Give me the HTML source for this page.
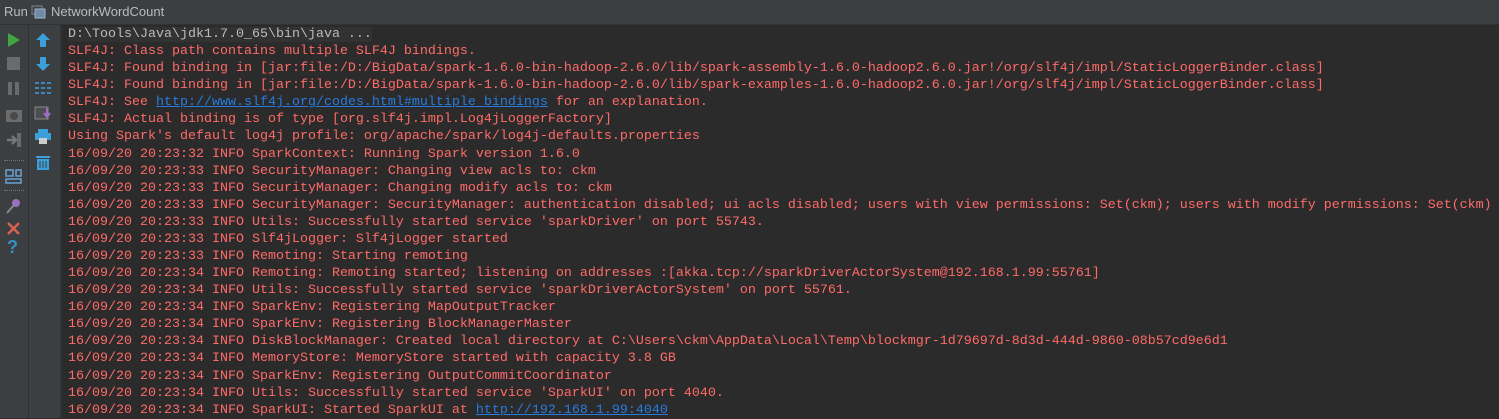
<!DOCTYPE html>
<html><head><style>
body{margin:0;width:1499px;height:418px;background:#2b2b2b;overflow:hidden;position:relative;font-family:"Liberation Sans",sans-serif}
#hdr{position:absolute;left:0;top:0;width:1499px;height:24px;background:#3c3f41;border-bottom:1px solid #323232;color:#bbb;font-size:13px;line-height:24px}
#tb1{position:absolute;left:0;top:25px;width:28px;height:393px;background:#3c3f41;border-right:1px solid #2f3133}
#tb2{position:absolute;left:29px;top:25px;width:31px;height:393px;background:#3c3f41;border-right:1px solid #323232}
#con{position:absolute;left:61px;top:25px;right:0;bottom:0;background:#2b2b2b;border-left:1px solid #313335}
pre{margin:0;position:absolute;left:68px;top:26px;font-family:"Liberation Mono",monospace;font-size:13.33px;line-height:17.08px;color:#ff6b68}
.g{color:#bbb;background:#323232}
a{color:#287bde;text-decoration:underline}
.ic{position:absolute}
</style></head><body>
<div id="hdr"><span style="position:absolute;left:4px">Run</span>
<svg class="ic" style="left:31px;top:5px" width="15" height="14"><rect x="1" y="1" width="10" height="8" fill="none" stroke="#7a8a99"/><rect x="4" y="4" width="10" height="9" fill="#6e8aa6" stroke="#9fb3c8"/></svg>
<span style="position:absolute;left:51px">NetworkWordCount</span></div>
<div id="tb1">
<svg class="ic" style="left:6px;top:7px" width="16" height="16"><path d="M2 1L14 8L2 15Z" fill="#3fa640"/></svg>
<svg class="ic" style="left:7px;top:32px" width="14" height="14"><rect width="13" height="13" fill="#6b6b6b"/></svg>
<svg class="ic" style="left:7px;top:57px" width="14" height="14"><rect x="1" width="4" height="13" fill="#6b6b6b"/><rect x="8" width="4" height="13" fill="#6b6b6b"/></svg>
<svg class="ic" style="left:5px;top:82px" width="18" height="16"><rect x="1" y="3" width="16" height="12" fill="#6b6b6b"/><circle cx="9" cy="9" r="4" fill="#4a4a4a"/></svg>
<svg class="ic" style="left:5px;top:107px" width="18" height="16"><path d="M2 8h8M7 4l4 4-4 4" stroke="#777" stroke-width="2.5" fill="none"/><rect x="12" y="1" width="4" height="14" fill="#6b6b6b"/></svg>
<div class="ic" style="left:4px;top:135px;width:20px;border-top:1px dotted #777"></div>
<svg class="ic" style="left:5px;top:143px" width="18" height="18"><rect x="1" y="2" width="7" height="6" fill="none" stroke="#6ba2d0" stroke-width="1.5"/><rect x="11" y="2" width="5" height="6" fill="none" stroke="#6ba2d0" stroke-width="1.5"/><rect x="1" y="11" width="15" height="4" fill="none" stroke="#6ba2d0" stroke-width="1.5"/></svg>
<div class="ic" style="left:4px;top:165px;width:20px;border-top:1px dotted #777"></div>
<svg class="ic" style="left:5px;top:172px" width="18" height="18"><circle cx="11" cy="6" r="4" fill="#9d6fc0"/><path d="M9 8L2 16" stroke="#888" stroke-width="2"/></svg>
<svg class="ic" style="left:6px;top:196px" width="16" height="16"><path d="M2 2L13 13M13 2L2 13" stroke="#d9604e" stroke-width="2.5"/></svg>
<div class="ic" style="left:7px;top:212px;color:#3592c4;font-weight:bold;font-size:18px">?</div>
</div>
<div id="tb2">
<svg class="ic" style="left:6px;top:7px" width="16" height="16"><path d="M8 1L15 8H11V15H5V8H1Z" fill="#3d9fd9"/></svg>
<svg class="ic" style="left:6px;top:31px" width="16" height="16"><path d="M8 15L15 8H11V1H5V8H1Z" fill="#3d9fd9"/></svg>
<svg class="ic" style="left:5px;top:55px" width="18" height="16"><path d="M1 3h16M1 8h16M1 13h16" stroke="#3d9fd9" stroke-width="1.5" stroke-dasharray="4 2"/></svg>
<svg class="ic" style="left:5px;top:80px" width="18" height="16"><rect x="1" y="2" width="13" height="12" fill="#4b4f52" stroke="#888"/><path d="M13 3v8M10 8l3 4 3-4" stroke="#9d6fc0" stroke-width="2" fill="none"/></svg>
<svg class="ic" style="left:6px;top:104px" width="16" height="16"><rect x="3" y="0" width="10" height="4" fill="#3d9fd9"/><rect x="0" y="4" width="16" height="7" fill="#3d9fd9"/><rect x="4" y="9" width="8" height="6" fill="#ccc"/></svg>
<svg class="ic" style="left:6px;top:129px" width="16" height="17"><rect x="1" y="2" width="14" height="2" fill="#3d9fd9"/><rect x="2" y="5" width="12" height="11" fill="#3d9fd9"/><path d="M5 7v7M8 7v7M11 7v7" stroke="#3c3f41"/></svg>
</div>
<div id="con"></div>
<pre><span class="g">D:\Tools\Java\jdk1.7.0_65\bin\java ...</span>
SLF4J: Class path contains multiple SLF4J bindings.
SLF4J: Found binding in [jar:file:/D:/BigData/spark-1.6.0-bin-hadoop-2.6.0/lib/spark-assembly-1.6.0-hadoop2.6.0.jar!/org/slf4j/impl/StaticLoggerBinder.class]
SLF4J: Found binding in [jar:file:/D:/BigData/spark-1.6.0-bin-hadoop-2.6.0/lib/spark-examples-1.6.0-hadoop2.6.0.jar!/org/slf4j/impl/StaticLoggerBinder.class]
SLF4J: See <a>http://www.slf4j.org/codes.html#multiple_bindings</a> for an explanation.
SLF4J: Actual binding is of type [org.slf4j.impl.Log4jLoggerFactory]
Using Spark's default log4j profile: org/apache/spark/log4j-defaults.properties
16/09/20 20:23:32 INFO SparkContext: Running Spark version 1.6.0
16/09/20 20:23:33 INFO SecurityManager: Changing view acls to: ckm
16/09/20 20:23:33 INFO SecurityManager: Changing modify acls to: ckm
16/09/20 20:23:33 INFO SecurityManager: SecurityManager: authentication disabled; ui acls disabled; users with view permissions: Set(ckm); users with modify permissions: Set(ckm)
16/09/20 20:23:33 INFO Utils: Successfully started service 'sparkDriver' on port 55743.
16/09/20 20:23:33 INFO Slf4jLogger: Slf4jLogger started
16/09/20 20:23:33 INFO Remoting: Starting remoting
16/09/20 20:23:34 INFO Remoting: Remoting started; listening on addresses :[akka.tcp://sparkDriverActorSystem@192.168.1.99:55761]
16/09/20 20:23:34 INFO Utils: Successfully started service 'sparkDriverActorSystem' on port 55761.
16/09/20 20:23:34 INFO SparkEnv: Registering MapOutputTracker
16/09/20 20:23:34 INFO SparkEnv: Registering BlockManagerMaster
16/09/20 20:23:34 INFO DiskBlockManager: Created local directory at C:\Users\ckm\AppData\Local\Temp\blockmgr-1d79697d-8d3d-444d-9860-08b57cd9e6d1
16/09/20 20:23:34 INFO MemoryStore: MemoryStore started with capacity 3.8 GB
16/09/20 20:23:34 INFO SparkEnv: Registering OutputCommitCoordinator
16/09/20 20:23:34 INFO Utils: Successfully started service 'SparkUI' on port 4040.
16/09/20 20:23:34 INFO SparkUI: Started SparkUI at <a>http://192.168.1.99:4040</a></pre>
</body></html>
